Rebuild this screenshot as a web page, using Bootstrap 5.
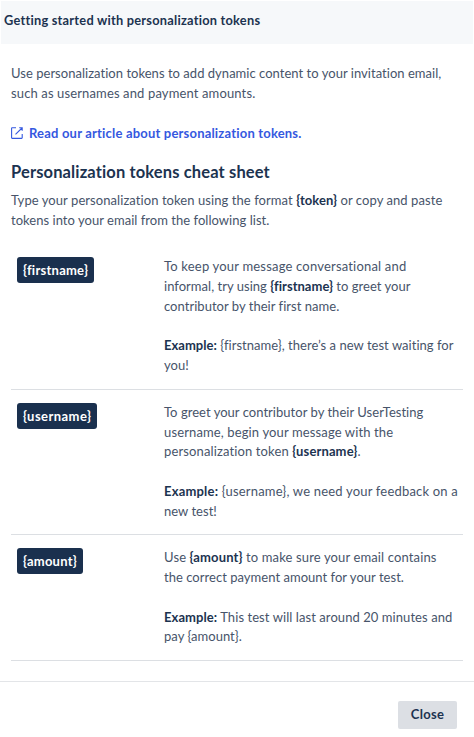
<!DOCTYPE html>
<html lang="en">
<head>
    <meta charset="UTF-8">
    <meta name="viewport" content="width=device-width, initial-scale=1">
    <title>Personalization tokens</title>
    <link rel="stylesheet" href="https://cdn.jsdelivr.net/npm/bootstrap@5.3.3/dist/css/bootstrap.min.css">
    <style>
        body {
            font-family: Lato, "Liberation Sans", sans-serif;
            font-size: 13px;
            line-height: 19.75px;
            letter-spacing: 0.03px;
            color: #47546a;
            white-space: nowrap;
        }
        strong, h1, h2 { color: #1c3350; }
        /* Letter spacing steps */
        .spaced-sm { letter-spacing: 0.07px; }
        .spaced-md { letter-spacing: 0.13px; }
        .spaced-lg { letter-spacing: 0.19px; }
        /* Header */
        .help-header {
            height: 43px;
            margin: 1px 1px 0;
            padding-left: 3px;
            padding-bottom: 4px;
            background: #f6f8fa;
        }
        .help-header h1 {
            font-size: 12.8px;
            font-weight: 700;
            letter-spacing: 0.24px;
        }
        /* Content */
        .help-content { padding: 20px 11px 0; }
        .help-link {
            gap: 6px;
            margin: 20px 0 19px;
            color: #3558e0;
            font-weight: 700;
        }
        .help-content h2 {
            font-size: 16.5px;
            line-height: 20px;
            font-weight: 700;
        }
        .help-content h2 + p { line-height: 20px; }
        /* Tokens list */
        .token-list { padding-top: 14px; }
        .token-item {
            padding: 13px 0;
            border-bottom: 1px solid #dcdfe3;
        }
        .token-name {
            flex: 0 0 153px;
            padding-left: 6px;
        }
        .token-name .badge {
            height: 26px;
            padding: 0 6px;
            border-radius: 3px;
            background: #1a304e;
            font-size: 13px;
            line-height: 26px;
            letter-spacing: 0.25px;
        }
        .token-name .badge-wide { letter-spacing: 0.45px; }
        /* Footer */
        .help-footer {
            margin-top: 20px;
            padding: 19px 17px 0 0;
            border-top: 1px solid #e3e5e8;
        }
        .btn-close-help {
            --bs-btn-bg: #dcdfe4;
            --bs-btn-color: #1c3350;
            --bs-btn-hover-bg: #ced3da;
            width: 59px;
            height: 28px;
            padding: 0;
            border: 0;
            border-radius: 2px;
            font-size: 13px;
            font-weight: 700;
            letter-spacing: 0.3px;
        }
    </style>
</head>
<body class="bg-white overflow-hidden">
    <header class="help-header d-flex align-items-center">
        <h1 class="mb-0">Getting started with personalization tokens</h1>
    </header>

    <main class="help-content">
        <p class="mb-0">Use personalization tokens to add dynamic content to your invitation email,<br><span class="spaced-md">such as usernames and payment amounts.</span></p>

        <a href="#" class="help-link spaced-lg d-flex align-items-center text-decoration-none">
            <svg width="12" height="12" viewBox="0 0 12 12" fill="none" stroke="currentColor" stroke-width="1.1">
                <path d="M5 .8H1.2Q.6.8.6 1.4V10.8Q.6 11.4 1.2 11.4H10.6Q11.2 11.4 11.2 10.8V7M4.5 7.3 11 1M8.2.8h3V3.8"/>
            </svg>
            <span>Read our article about personalization tokens.</span>
        </a>

        <h2 class="spaced-md">Personalization tokens cheat sheet</h2>
        <p class="mb-0"><span class="spaced-sm">Type your personalization token using the format <strong>{token}</strong> or copy and paste</span><br>tokens into your email from the following list.</p>

        <div class="token-list">
            <div class="token-item d-flex">
                <div class="token-name"><span class="badge">{firstname}</span></div>
                <div>
                    <span class="spaced-lg">To keep your message conversational and</span><br>
                    informal, try using <strong>{firstname}</strong> to greet your<br>
                    contributor by their first name.<br><br>
                    <strong>Example:</strong> {firstname}, there’s a new test waiting for<br>
                    you!
                </div>
            </div>
            <div class="token-item d-flex">
                <div class="token-name"><span class="badge badge-wide">{username}</span></div>
                <div>
                    To greet your contributor by their UserTesting<br>
                    <span class="spaced-md">username, begin your message with the</span><br>
                    <span class="spaced-md">personalization token <strong>{username}</strong>.</span><br><br>
                    <span class="spaced-lg"><strong>Example:</strong> {username}, we need your feedback on a</span><br>
                    new test!
                </div>
            </div>
            <div class="token-item d-flex">
                <div class="token-name"><span class="badge">{amount}</span></div>
                <div>
                    <span class="spaced-md">Use <strong>{amount}</strong> to make sure your email contains</span><br>
                    the correct payment amount for your test.<br><br>
                    <span class="spaced-sm"><strong>Example:</strong> This test will last around 20 minutes and</span><br>
                    pay {amount}.
                </div>
            </div>
        </div>
    </main>

    <footer class="help-footer d-flex justify-content-end">
        <button type="button" class="btn btn-close-help">Close</button>
    </footer>

    <script src="https://cdn.jsdelivr.net/npm/bootstrap@5.3.3/dist/js/bootstrap.bundle.min.js"></script>
</body>
</html>
